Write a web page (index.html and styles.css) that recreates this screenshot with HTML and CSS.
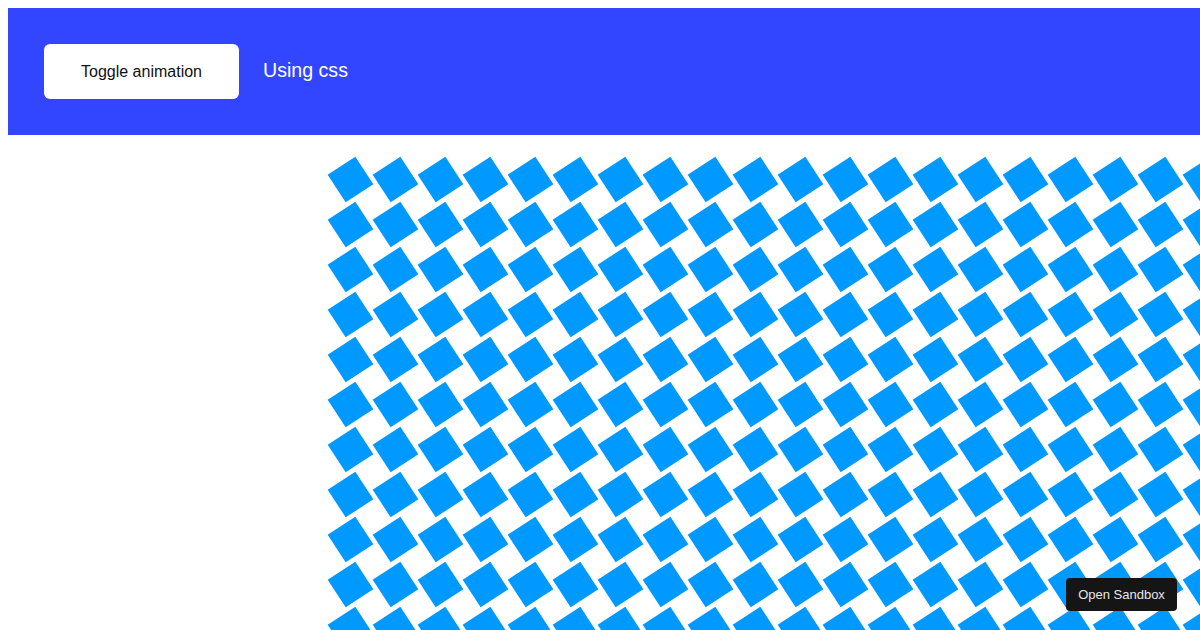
FILE: index.html
```html
<!DOCTYPE html>
<html>
<head>
<meta charset="utf-8">
<link rel="stylesheet" href="styles.css">
</head>
<body>
<header class="bar">
  <button class="toggle">Toggle animation</button>
  <span class="mode">Using css</span>
</header>
<div class="stage">
<main class="grid">
<i></i><i></i><i></i><i></i><i></i><i></i><i></i><i></i><i></i><i></i><i></i><i></i><i></i><i></i><i></i><i></i><i></i><i></i><i></i><i></i>
<i></i><i></i><i></i><i></i><i></i><i></i><i></i><i></i><i></i><i></i><i></i><i></i><i></i><i></i><i></i><i></i><i></i><i></i><i></i><i></i>
<i></i><i></i><i></i><i></i><i></i><i></i><i></i><i></i><i></i><i></i><i></i><i></i><i></i><i></i><i></i><i></i><i></i><i></i><i></i><i></i>
<i></i><i></i><i></i><i></i><i></i><i></i><i></i><i></i><i></i><i></i><i></i><i></i><i></i><i></i><i></i><i></i><i></i><i></i><i></i><i></i>
<i></i><i></i><i></i><i></i><i></i><i></i><i></i><i></i><i></i><i></i><i></i><i></i><i></i><i></i><i></i><i></i><i></i><i></i><i></i><i></i>
<i></i><i></i><i></i><i></i><i></i><i></i><i></i><i></i><i></i><i></i><i></i><i></i><i></i><i></i><i></i><i></i><i></i><i></i><i></i><i></i>
<i></i><i></i><i></i><i></i><i></i><i></i><i></i><i></i><i></i><i></i><i></i><i></i><i></i><i></i><i></i><i></i><i></i><i></i><i></i><i></i>
<i></i><i></i><i></i><i></i><i></i><i></i><i></i><i></i><i></i><i></i><i></i><i></i><i></i><i></i><i></i><i></i><i></i><i></i><i></i><i></i>
<i></i><i></i><i></i><i></i><i></i><i></i><i></i><i></i><i></i><i></i><i></i><i></i><i></i><i></i><i></i><i></i><i></i><i></i><i></i><i></i>
<i></i><i></i><i></i><i></i><i></i><i></i><i></i><i></i><i></i><i></i><i></i><i></i><i></i><i></i><i></i><i></i><i></i><i></i><i></i><i></i>
<i></i><i></i><i></i><i></i><i></i><i></i><i></i><i></i><i></i><i></i><i></i><i></i><i></i><i></i><i></i><i></i><i></i><i></i><i></i><i></i>
</main>
</div>
<a class="sandbox">Open Sandbox</a>
</body>
</html>
```
FILE: styles.css
```css
html {
  overflow: hidden;
  height: 100%;
}
body {
  margin: 8px 0 0 8px;
  height: 622px;
  overflow: hidden;
  font-family: "Liberation Sans", Arial, sans-serif;
  background: #ffffff;
}
.bar {
  background: #3346ff;
  height: 127px;
  box-sizing: border-box;
  padding: 36px;
  display: flex;
  align-items: center;
  gap: 24px;
}
.toggle {
  width: 195px;
  height: 55px;
  border: none;
  border-radius: 6px;
  background: #ffffff;
  color: #111111;
  font-family: "Liberation Sans", Arial, sans-serif;
  font-size: 16px;
  padding: 0;
  margin: 0;
}
.mode {
  color: #ffffff;
  font-size: 19.6px;
  margin-top: -2px;
}
.stage {
  overflow: hidden;
  height: 495px;
}
.grid {
  display: grid;
  grid-template-columns: repeat(20, 33px);
  grid-auto-rows: 33px;
  gap: 12px;
  margin: 28px 0 0 326px;
  width: 890px;
}
.grid i {
  display: block;
  width: 33px;
  height: 33px;
  background: #0099ff;
  transform: rotate(-33deg);
}
.sandbox {
  position: fixed;
  right: 23px;
  bottom: 19px;
  width: 111px;
  height: 33px;
  box-sizing: border-box;
  background: #151515;
  color: #e6e6e6;
  border-radius: 4px;
  font-size: 13px;
  display: flex;
  align-items: center;
  justify-content: center;
}
```
